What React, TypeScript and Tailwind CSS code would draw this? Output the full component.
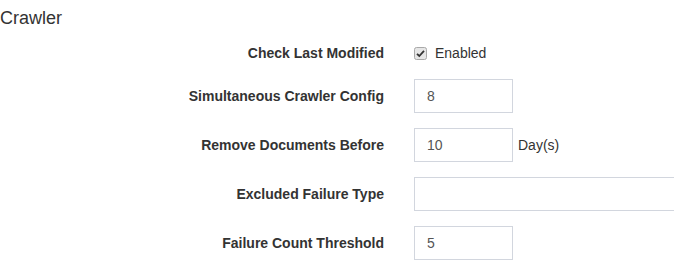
const rows = [
  { label: 'Simultaneous Crawler Config', value: '8', width: 'w-[99px]' },
  { label: 'Remove Documents Before', value: '10', width: 'w-[99px]', suffix: 'Day(s)' },
  { label: 'Excluded Failure Type', value: '', width: 'w-[280px]' },
  { label: 'Failure Count Threshold', value: '5', width: 'w-[99px]' },
]

// grey Windows-like checkbox, checked
function CheckBox() {
  return (
    <svg width="13" height="13" viewBox="0 0 13 13" className="shrink-0">
      <rect x="0.5" y="0.5" width="12" height="12" rx="2" fill="#e6e6e6" stroke="#a9a9a9" />
      <path d="M3 6.8 L5.3 9 L10 3.8" fill="none" stroke="#333" strokeWidth="1.8" />
    </svg>
  )
}

export default function App() {
  return (
    <div className="w-[674px] h-[274px] overflow-hidden bg-white text-[#333] font-['Liberation_Sans',Arial,sans-serif]">
      <h3 className="pt-[7px] text-[18px] leading-[22px]">Crawler</h3>

      <div className="mt-[10px] flex items-center h-[28px]">
        <div className="w-[384px] text-right text-[14px] font-bold">Check Last Modified</div>
        <label className="ml-[30px] flex items-center gap-[8px] text-[14px]">
          <CheckBox />
          Enabled
        </label>
      </div>

      <div className="mt-[12px] flex flex-col gap-[15px]">
        {rows.map((r) => (
          <div key={r.label} className="flex items-center h-[34px]">
            <div className="w-[384px] shrink-0 text-right text-[14px] font-bold">{r.label}</div>
            <input
              type="text"
              defaultValue={r.value}
              className={`ml-[30px] ${r.width} shrink-0 h-[34px] border border-[#d2d6de] px-[12px] text-[14px] text-[#555] outline-none`}
            />
            {r.suffix && <span className="ml-[5px] text-[14px]">{r.suffix}</span>}
          </div>
        ))}
      </div>
    </div>
  )
}
